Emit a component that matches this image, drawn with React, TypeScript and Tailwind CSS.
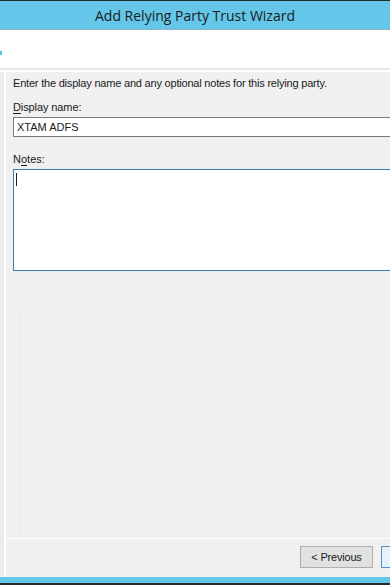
export default function App() {
  return (
    <div
      className="w-[390px] h-[585px] overflow-hidden flex flex-col bg-[#f0f0f0] text-[#1a1a1a]"
      style={{ fontFamily: '"Liberation Sans", Arial, sans-serif' }}
    >
      {/* window frame top */}
      <div className="h-px bg-[#2b2b2b] shrink-0" />
      <div className="h-[29px] shrink-0 bg-[#64c7e9] flex items-center justify-center border-b border-[#8fb5c4]">
        <span className="text-[14px] text-[#1b1b1b]" style={{ fontFamily: '"Open Sans", "Noto Sans", sans-serif' }}>
          Add Relying Party Trust Wizard
        </span>
      </div>

      {/* header banner */}
      <div className="h-[38px] shrink-0 bg-white flex items-center">
        <div className="w-[2px] h-[4px] bg-[#4fc3e8] mt-[8px]" />
      </div>
      <div className="h-[2px] shrink-0 bg-[#e6e6e6]" />
      <div className="h-[2px] shrink-0 bg-white" />

      {/* body */}
      <div className="flex-1 flex min-h-0">
        <div className="w-[4px] shrink-0 bg-[#ececec]" />
        <div className="w-[2px] shrink-0 bg-white" />
        <div className="flex-1 flex flex-col min-w-0">
          <div className="flex-1 pl-[7px] pt-[4px]">
            <p className="text-[11px] leading-[14px] tracking-[-0.2px] whitespace-nowrap">
              Enter the display name and any optional notes for this relying party.
            </p>
            <p className="text-[11px] leading-[14px] tracking-[-0.1px] mt-[10px] whitespace-nowrap">
              <span className="underline underline-offset-2">D</span>isplay name:
            </p>
            <div className="mt-[3px] w-[400px] h-[20px] bg-white border border-[#7a7a7a] flex items-center pl-[3px] text-[11px]">
              XTAM ADFS
            </div>
            <p className="text-[11px] leading-[14px] mt-[15px] whitespace-nowrap">
              N<span className="underline underline-offset-2">o</span>tes:
            </p>
            <div className="mt-[3px] w-[400px] h-[102px] bg-white border border-[#3c7bae] pl-[2px] pt-[3px]">
              <div className="w-px h-[13px] bg-[#1a1a1a]" />
            </div>
            <div className="mt-[41px] ml-[7px] w-px h-[225px] bg-[#e9e9e9]" />
          </div>
          <div className="h-px shrink-0 bg-white" />
          <div className="h-[38px] shrink-0 flex items-start justify-end pt-[7px] gap-[8px] -mr-[64px]">
            <button className="w-[73px] h-[22px] bg-[#e1e1e1] border border-[#adadad] text-[11px] tracking-[-0.2px] text-[#1a1a1a]">
              &lt; Previous
            </button>
            <button className="w-[73px] h-[22px] bg-[#e5f1fb] border border-[#5b8fc9] text-[11px] text-[#1a1a1a]">
              Next &gt;
            </button>
          </div>
        </div>
      </div>

      {/* window frame bottom */}
      <div className="h-[6px] shrink-0 bg-[#64c7e9]" />
      <div className="h-[2px] shrink-0 bg-[#2b2b2b]" />
    </div>
  );
}
